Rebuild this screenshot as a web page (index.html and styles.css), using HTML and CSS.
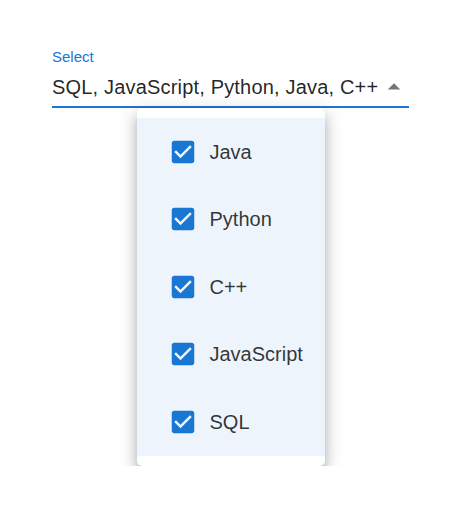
FILE: index.html
```html
<!DOCTYPE html>
<html lang="en">
<head>
    <meta charset="UTF-8">
    <meta name="viewport" content="width=device-width, initial-scale=1.0">
    <title>Select</title>
    <link rel="stylesheet" href="styles.css">
</head>
<body>

<div class="page">
    <div class="field">
        <label class="field-label">Select</label>
        <div class="field-input">
            <span class="field-value">SQL, JavaScript, Python, Java, C++</span>
            <svg class="arrow" viewBox="0 0 24 24"><path d="M7 14l5-5 5 5z"/></svg>
        </div>
    </div>

    <ul class="menu">
        <li class="menu-item">
            <span class="check"><svg viewBox="0 0 24 24"><path d="M19 3H5c-1.11 0-2 .9-2 2v14c0 1.1.89 2 2 2h14c1.11 0 2-.9 2-2V5c0-1.1-.89-2-2-2zm-9 14l-5-5 1.41-1.41L10 14.17l7.59-7.59L19 8l-9 9z"/></svg></span>
            <span class="item-text">Java</span>
        </li>
        <li class="menu-item">
            <span class="check"><svg viewBox="0 0 24 24"><path d="M19 3H5c-1.11 0-2 .9-2 2v14c0 1.1.89 2 2 2h14c1.11 0 2-.9 2-2V5c0-1.1-.89-2-2-2zm-9 14l-5-5 1.41-1.41L10 14.17l7.59-7.59L19 8l-9 9z"/></svg></span>
            <span class="item-text">Python</span>
        </li>
        <li class="menu-item">
            <span class="check"><svg viewBox="0 0 24 24"><path d="M19 3H5c-1.11 0-2 .9-2 2v14c0 1.1.89 2 2 2h14c1.11 0 2-.9 2-2V5c0-1.1-.89-2-2-2zm-9 14l-5-5 1.41-1.41L10 14.17l7.59-7.59L19 8l-9 9z"/></svg></span>
            <span class="item-text">C++</span>
        </li>
        <li class="menu-item">
            <span class="check"><svg viewBox="0 0 24 24"><path d="M19 3H5c-1.11 0-2 .9-2 2v14c0 1.1.89 2 2 2h14c1.11 0 2-.9 2-2V5c0-1.1-.89-2-2-2zm-9 14l-5-5 1.41-1.41L10 14.17l7.59-7.59L19 8l-9 9z"/></svg></span>
            <span class="item-text">JavaScript</span>
        </li>
        <li class="menu-item">
            <span class="check"><svg viewBox="0 0 24 24"><path d="M19 3H5c-1.11 0-2 .9-2 2v14c0 1.1.89 2 2 2h14c1.11 0 2-.9 2-2V5c0-1.1-.89-2-2-2zm-9 14l-5-5 1.41-1.41L10 14.17l7.59-7.59L19 8l-9 9z"/></svg></span>
            <span class="item-text">SQL</span>
        </li>
    </ul>
</div>

</body>
</html>
```

FILE: styles.css
```css
body {
    margin: 0;
    background-color: #fff;
    color: rgba(0, 0, 0, 0.87);
    font-family: "Liberation Sans", Arial, sans-serif;
}
.page {
    padding: 48px 0 0 52px;
}
.field {
    width: 357px;
}
.field-label {
    display: block;
    font-size: 15px;
    line-height: 18px;
    color: #1976d2;
}
.field-input {
    display: flex;
    align-items: center;
    margin-top: 7px;
    padding-bottom: 5px;
    border-bottom: 2px solid #1976d2;
}
.field-value {
    flex: 1;
    font-size: 20px;
    line-height: 28px;
    letter-spacing: 0.18px;
    white-space: nowrap;
    overflow: hidden;
}
.arrow {
    width: 30px;
    height: 30px;
    margin: -1px 0;
    fill: rgba(0, 0, 0, 0.54);
}
.menu {
    list-style: none;
    margin: 0 0 0 85px;
    padding: 10px 0;
    width: 188px;
    background: #fff;
    border-radius: 5px;
    box-shadow: 0 6px 6px -4px rgba(0, 0, 0, 0.22),
                0 10px 12px 1px rgba(0, 0, 0, 0.16),
                0 4px 18px 3px rgba(0, 0, 0, 0.13);
}
.menu-item {
    display: flex;
    align-items: center;
    height: 67.5px;
    padding: 0 20px;
    background-color: rgba(25, 118, 210, 0.08);
}
.check {
    display: flex;
    padding: 11.25px;
}
.check svg {
    width: 30px;
    height: 30px;
    fill: #1976d2;
}
.item-text {
    font-size: 20px;
    line-height: 30px;
    color: rgba(0, 0, 0, 0.8);
}
```
